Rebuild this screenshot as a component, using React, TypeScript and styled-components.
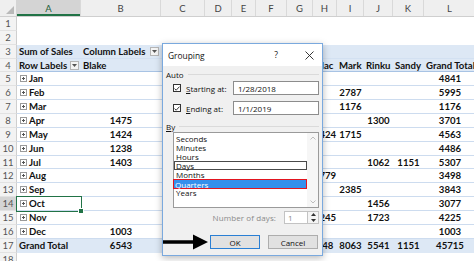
import React from 'react';
import styled, { createGlobalStyle, css } from 'styled-components';

const GlobalStyle = createGlobalStyle`
  html, body {
    margin: 0;
    padding: 0;
    background: #fff;
  }
  body {
    overflow: hidden;
  }
`;

const LETTERS = ['A', 'B', 'C', 'D', 'E', 'F', 'G', 'H', 'I', 'J', 'K', 'L'];
const WIDTHS = [64, 80, 44, 27, 24, 31, 26, 24, 27, 29, 31, 52];
const BAND = WIDTHS.map((w) => `${w}px`).join(' ');
const ROW_H = 13.86;

type Tone = 'plain' | 'head' | 'headLast' | 'body' | 'total';
type Vals = Partial<Record<'B' | 'H' | 'I' | 'J' | 'K' | 'L', string>>;

interface IMonth {
  label: string;
  vals: Vals;
}

const months: Array<IMonth> = [
  { label: 'Jan', vals: { L: '4841' } },
  { label: 'Feb', vals: { I: '2787', L: '5995' } },
  { label: 'Mar', vals: { I: '1176', L: '1176' } },
  { label: 'Apr', vals: { B: '1475', J: '1300', L: '3701' } },
  { label: 'May', vals: { B: '1424', H: '1424', I: '1715', L: '4563' } },
  { label: 'Jun', vals: { B: '1238', L: '4486' } },
  { label: 'Jul', vals: { B: '1403', J: '1062', K: '1151', L: '5307' } },
  { label: 'Aug', vals: { H: '2779', L: '3498' } },
  { label: 'Sep', vals: { I: '2385', L: '3843' } },
  { label: 'Oct', vals: { J: '1456', L: '3077' } },
  { label: 'Nov', vals: { H: '1245', J: '1723', L: '4225' } },
  { label: 'Dec', vals: { B: '1003', L: '1003' } },
];

const totals: Vals = { B: '6543', H: '448', I: '8063', J: '5541', K: '1151', L: '45715' };

const Page = styled.div`
  position: relative;
  width: 474px;
  height: 261px;
  overflow: hidden;
  font-family: Lato, 'Liberation Sans', sans-serif;
`;

const Sheet = styled.div`
  display: flex;
  flex-direction: column;
`;

const HeaderRow = styled.div`
  display: grid;
  grid-template-columns: 17px ${BAND};
  height: 17px;
  box-sizing: border-box;
  background: #efefef;
  border-bottom: 1px solid #cfcfcf;
`;

const Corner = styled.div`
  display: flex;
  align-items: flex-end;
  justify-content: flex-end;
  padding: 0 2px 2px 0;
  border-right: 1px solid #d4d4d4;
`;

const ColHead = styled.div<{ $active?: boolean }>`
  display: flex;
  align-items: center;
  justify-content: center;
  font-size: 9.5px;
  color: #444;
  border-right: 1px solid #d9d9d9;
  ${(p) =>
    p.$active &&
    css`
      background: #d4d4d4;
      color: #1d5e3a;
      box-shadow: inset 0 -2px 0 #217346;
    `}
`;

const Row = styled.div`
  display: grid;
  grid-template-columns: 17px 1fr;
  height: ${ROW_H}px;
`;

const RowHead = styled.div<{ $active?: boolean }>`
  display: flex;
  align-items: center;
  justify-content: center;
  box-sizing: border-box;
  font-size: 9.5px;
  color: #555;
  background: ${(p) => (p.$active ? '#d4d4d4' : '#f3f3f3')};
  border-right: 1px solid #cfcfcf;
  border-bottom: 1px solid #e2e2e2;
`;

const toneStyles: Record<Tone, ReturnType<typeof css>> = {
  plain: css`
    background: #fff;
  `,
  head: css`
    background: #dde8f5;
    border-bottom: 1px solid #d3e1f2;
  `,
  headLast: css`
    background: #dde8f5;
    border-bottom: 1px solid #a8c3e4;
  `,
  body: css`
    background: #fff;
    border-bottom: 1px solid #cddcef;
  `,
  total: css`
    background: #dde8f5;
  `,
};

const Band = styled.div<{ $tone: Tone }>`
  display: grid;
  grid-template-columns: ${BAND};
  box-sizing: border-box;
  ${(p) => toneStyles[p.$tone]}
`;

const Cell = styled.div<{ $center?: boolean; $selected?: boolean }>`
  position: relative;
  display: flex;
  align-items: center;
  justify-content: ${(p) => (p.$center ? 'center' : 'flex-start')};
  padding: 0 2px;
  font-size: 9.6px;
  font-weight: 700;
  color: #111;
  white-space: nowrap;
  ${(p) =>
    p.$selected &&
    css`
      &::before {
        content: '';
        position: absolute;
        inset: -1px -1px -2px -1px;
        border: 1.5px solid #217346;
      }
      &::after {
        content: '';
        position: absolute;
        right: -3px;
        bottom: -4px;
        width: 4px;
        height: 4px;
        background: #217346;
        border: 1px solid #fff;
      }
    `}
`;

const DropBtn = styled.span<{ $push?: boolean }>`
  display: flex;
  align-items: center;
  justify-content: center;
  width: 9px;
  height: 9px;
  box-sizing: border-box;
  margin-left: ${(p) => (p.$push ? 'auto' : '3px')};
  border: 1px solid #b5b5b5;
  background: #f4f4f4;
`;

const Expand = styled.svg`
  flex: none;
  margin: 0 2px 0 1px;
`;

const DropDown = ({ push }: { push?: boolean }) => (
  <DropBtn $push={push}>
    <svg width='5' height='3' viewBox='0 0 5 3'>
      <path d='M0 0h5L2.5 3z' fill='#555' />
    </svg>
  </DropBtn>
);

const PlusBox = () => (
  <Expand width='7' height='7' viewBox='0 0 7 7'>
    <rect x='0.5' y='0.5' width='6' height='6' fill='#fff' stroke='#9a9a9a' />
    <path d='M2 3.5h3M3.5 2v3' stroke='#555' strokeWidth='1' />
  </Expand>
);

const ValueCells = ({ vals }: { vals: Vals }) => (
  <>
    <Cell $center>{vals.B}</Cell>
    <Cell />
    <Cell />
    <Cell />
    <Cell />
    <Cell />
    <Cell $center>{vals.H}</Cell>
    <Cell $center>{vals.I}</Cell>
    <Cell $center>{vals.J}</Cell>
    <Cell $center>{vals.K}</Cell>
    <Cell $center>{vals.L}</Cell>
  </>
);

const EmptyCells = ({ count }: { count: number }) => (
  <>
    {Array.from({ length: count }).map((_, i) => (
      <Cell key={i} />
    ))}
  </>
);

/* ---------- Grouping dialog ---------- */

const Dialog = styled.div`
  position: absolute;
  left: 162px;
  top: 43px;
  width: 161px;
  height: 213px;
  box-sizing: border-box;
  display: flex;
  flex-direction: column;
  background: #f0f0f0;
  border: 1px solid #7aa9de;
  box-shadow: 0 2px 7px rgba(0, 0, 0, 0.28);
  font-family: 'Open Sans', 'Noto Sans', sans-serif;
  font-size: 8px;
  color: #111;
`;

const TitleBar = styled.div`
  display: flex;
  align-items: center;
  height: 22px;
  padding: 0 4px 0 5px;
  background: #fff;
`;

const Title = styled.span`
  flex: 1;
  font-size: 8.4px;
`;

const Help = styled.span`
  width: 12px;
  margin-right: 18px;
  text-align: center;
  font-size: 8.6px;
`;

const Close = styled.span`
  display: flex;
  justify-content: center;
  width: 18px;
`;

const Body = styled.div`
  display: flex;
  flex-direction: column;
  padding: 0 3px;
`;

const GroupLabel = styled.div<{ $gap: number }>`
  display: flex;
  align-items: center;
  gap: 4px;
  height: 12px;
  margin-top: ${(p) => p.$gap}px;
  &::after {
    content: '';
    flex: 1;
    height: 1px;
    background: #dadada;
  }
`;

const FieldRow = styled.div<{ $gap: number }>`
  display: flex;
  align-items: center;
  height: 14px;
  margin-top: ${(p) => p.$gap}px;
  padding-left: 7px;
`;

const CheckBox = styled.span`
  display: flex;
  align-items: center;
  justify-content: center;
  width: 8px;
  height: 8px;
  box-sizing: border-box;
  border: 1px solid #333;
  background: #fff;
`;

const FieldLabel = styled.span`
  margin-left: 5px;
`;

const TextBox = styled.div`
  display: flex;
  align-items: center;
  width: 86px;
  height: 14px;
  box-sizing: border-box;
  margin-left: auto;
  padding-left: 4px;
  border: 1px solid #8c8c8c;
  background: #fff;
`;

const ListBox = styled.div`
  display: flex;
  width: 146px;
  height: 76px;
  box-sizing: border-box;
  margin-left: 7px;
  border: 1px solid #9a9a9a;
  background: #fff;
`;

const Items = styled.div`
  flex: 1;
  display: flex;
  flex-direction: column;
  padding-top: 1px;
`;

const Item = styled.div<{ $focus?: boolean; $selected?: boolean }>`
  display: flex;
  align-items: center;
  height: 9px;
  box-sizing: border-box;
  padding-left: 2px;
  line-height: 7px;
  ${(p) =>
    p.$focus &&
    css`
      border: 1px solid #4a4a4a;
      padding-left: 1px;
    `}
  ${(p) =>
    p.$selected &&
    css`
      height: 10px;
      margin: 0 0 -1px -1px;
      padding-left: 1px;
      background: #3590ec;
      color: #fff;
      border: 1.5px solid #e3151f;
    `}
`;

const ScrollTrack = styled.div`
  display: flex;
  flex-direction: column;
  justify-content: space-between;
  align-items: center;
  width: 11px;
  padding: 3px 0;
  box-sizing: border-box;
  background: #f6f6f6;
`;

const DaysRow = styled.div`
  display: flex;
  align-items: center;
  justify-content: flex-end;
  height: 13px;
  margin-top: 3px;
`;

const Disabled = styled.span`
  margin-right: 8px;
  color: #8a8a8a;
  letter-spacing: 0.1px;
`;

const SpinInput = styled.div`
  display: flex;
  align-items: center;
  width: 24px;
  height: 13px;
  box-sizing: border-box;
  padding-left: 3px;
  border: 1px solid #c3c3c3;
  background: #fff;
  color: #8a8a8a;
`;

const Spinner = styled.div`
  display: flex;
  flex-direction: column;
  align-items: center;
  justify-content: space-around;
  width: 11px;
  height: 13px;
  box-sizing: border-box;
  border: 1px solid #c3c3c3;
  border-left: none;
  background: #f4f4f4;
`;

const ButtonRow = styled.div`
  display: flex;
  justify-content: flex-end;
  gap: 8px;
  margin-top: 11px;
  padding-right: 1px;
`;

const Button = styled.div<{ $default?: boolean }>`
  display: flex;
  align-items: center;
  justify-content: center;
  width: 50px;
  height: 14px;
  box-sizing: border-box;
  background: #e1e1e1;
  border: ${(p) => (p.$default ? '1.5px solid #2a7fd4' : '1px solid #adadad')};
`;

const Arrow = styled.svg`
  position: absolute;
  left: 162px;
  top: 233px;
`;

const Check = () => (
  <CheckBox>
    <svg width='6' height='5' viewBox='0 0 6 5'>
      <path d='M0.5 2.6L2.2 4.2L5.5 0.6' fill='none' stroke='#222' strokeWidth='0.9' />
    </svg>
  </CheckBox>
);

const Chevron = ({ up }: { up?: boolean }) => (
  <svg width='6' height='4' viewBox='0 0 6 4'>
    <path d={up ? 'M0.5 3.5L3 1L5.5 3.5' : 'M0.5 0.5L3 3L5.5 0.5'} fill='none' stroke='#bdbdbd' strokeWidth='1' />
  </svg>
);

const units = ['Seconds', 'Minutes', 'Hours', 'Days', 'Months', 'Quarters', 'Years'];

const GroupingDialog: React.FunctionComponent = () => (
  <Dialog>
    <TitleBar>
      <Title>Grouping</Title>
      <Help>?</Help>
      <Close>
        <svg width='9' height='9' viewBox='0 0 9 9'>
          <path d='M0.5 0.5L8.5 8.5M8.5 0.5L0.5 8.5' stroke='#222' strokeWidth='0.9' />
        </svg>
      </Close>
    </TitleBar>
    <Body>
      <GroupLabel $gap={2}>
        <span>Auto</span>
      </GroupLabel>
      <FieldRow $gap={1}>
        <Check />
        <FieldLabel>
          <u>S</u>tarting at:
        </FieldLabel>
        <TextBox>1/28/2018</TextBox>
      </FieldRow>
      <FieldRow $gap={6}>
        <Check />
        <FieldLabel>
          <u>E</u>nding at:
        </FieldLabel>
        <TextBox>1/1/2019</TextBox>
      </FieldRow>
      <GroupLabel $gap={5}>
        <span>
          <u>B</u>y
        </span>
      </GroupLabel>
      <ListBox>
        <Items>
          {units.map((u) => (
            <Item key={u} $focus={u === 'Days'} $selected={u === 'Quarters'}>
              {u}
            </Item>
          ))}
        </Items>
        <ScrollTrack>
          <Chevron up />
          <Chevron />
        </ScrollTrack>
      </ListBox>
      <DaysRow>
        <Disabled>Number of days:</Disabled>
        <SpinInput>1</SpinInput>
        <Spinner>
          <svg width='5' height='3' viewBox='0 0 5 3'>
            <path d='M0 3h5L2.5 0z' fill='#333' />
          </svg>
          <svg width='5' height='3' viewBox='0 0 5 3'>
            <path d='M0 0h5L2.5 3z' fill='#333' />
          </svg>
        </Spinner>
      </DaysRow>
      <ButtonRow>
        <Button $default>OK</Button>
        <Button>Cancel</Button>
      </ButtonRow>
    </Body>
  </Dialog>
);

const App: React.FunctionComponent = () => {
  return (
    <Page>
      <GlobalStyle />
      <Sheet>
        <HeaderRow>
          <Corner>
            <svg width='8' height='8' viewBox='0 0 8 8'>
              <path d='M8 0V8H0z' fill='#b9b9b9' />
            </svg>
          </Corner>
          {LETTERS.map((l) => (
            <ColHead key={l} $active={l === 'A'}>
              {l}
            </ColHead>
          ))}
        </HeaderRow>

        {[1, 2].map((n) => (
          <Row key={n}>
            <RowHead>{n}</RowHead>
            <Band $tone='plain' />
          </Row>
        ))}

        <Row>
          <RowHead>3</RowHead>
          <Band $tone='head'>
            <Cell>Sum of Sales</Cell>
            <Cell>
              Column Labels
              <DropDown push />
            </Cell>
            <EmptyCells count={10} />
          </Band>
        </Row>

        <Row>
          <RowHead>4</RowHead>
          <Band $tone='headLast'>
            <Cell>
              Row Labels
              <DropDown />
            </Cell>
            <Cell>Blake</Cell>
            <EmptyCells count={5} />
            <Cell>Mac</Cell>
            <Cell>Mark</Cell>
            <Cell>Rinku</Cell>
            <Cell>Sandy</Cell>
            <Cell>Grand Total</Cell>
          </Band>
        </Row>

        {months.map((m, i) => (
          <Row key={m.label}>
            <RowHead $active={i + 5 === 14}>{i + 5}</RowHead>
            <Band $tone='body'>
              <Cell $selected={m.label === 'Oct'}>
                <PlusBox />
                {m.label}
              </Cell>
              <ValueCells vals={m.vals} />
            </Band>
          </Row>
        ))}

        <Row>
          <RowHead>17</RowHead>
          <Band $tone='total'>
            <Cell>Grand Total</Cell>
            <ValueCells vals={totals} />
          </Band>
        </Row>

        <Row>
          <RowHead>18</RowHead>
          <Band $tone='plain' />
        </Row>
      </Sheet>

      <GroupingDialog />

      <Arrow width='48' height='18' viewBox='0 0 48 18'>
        <path d='M1 7.2H31V1.5L46 9L31 16.5V10.8H1z' fill='#000' />
      </Arrow>
    </Page>
  );
};

export default App;
